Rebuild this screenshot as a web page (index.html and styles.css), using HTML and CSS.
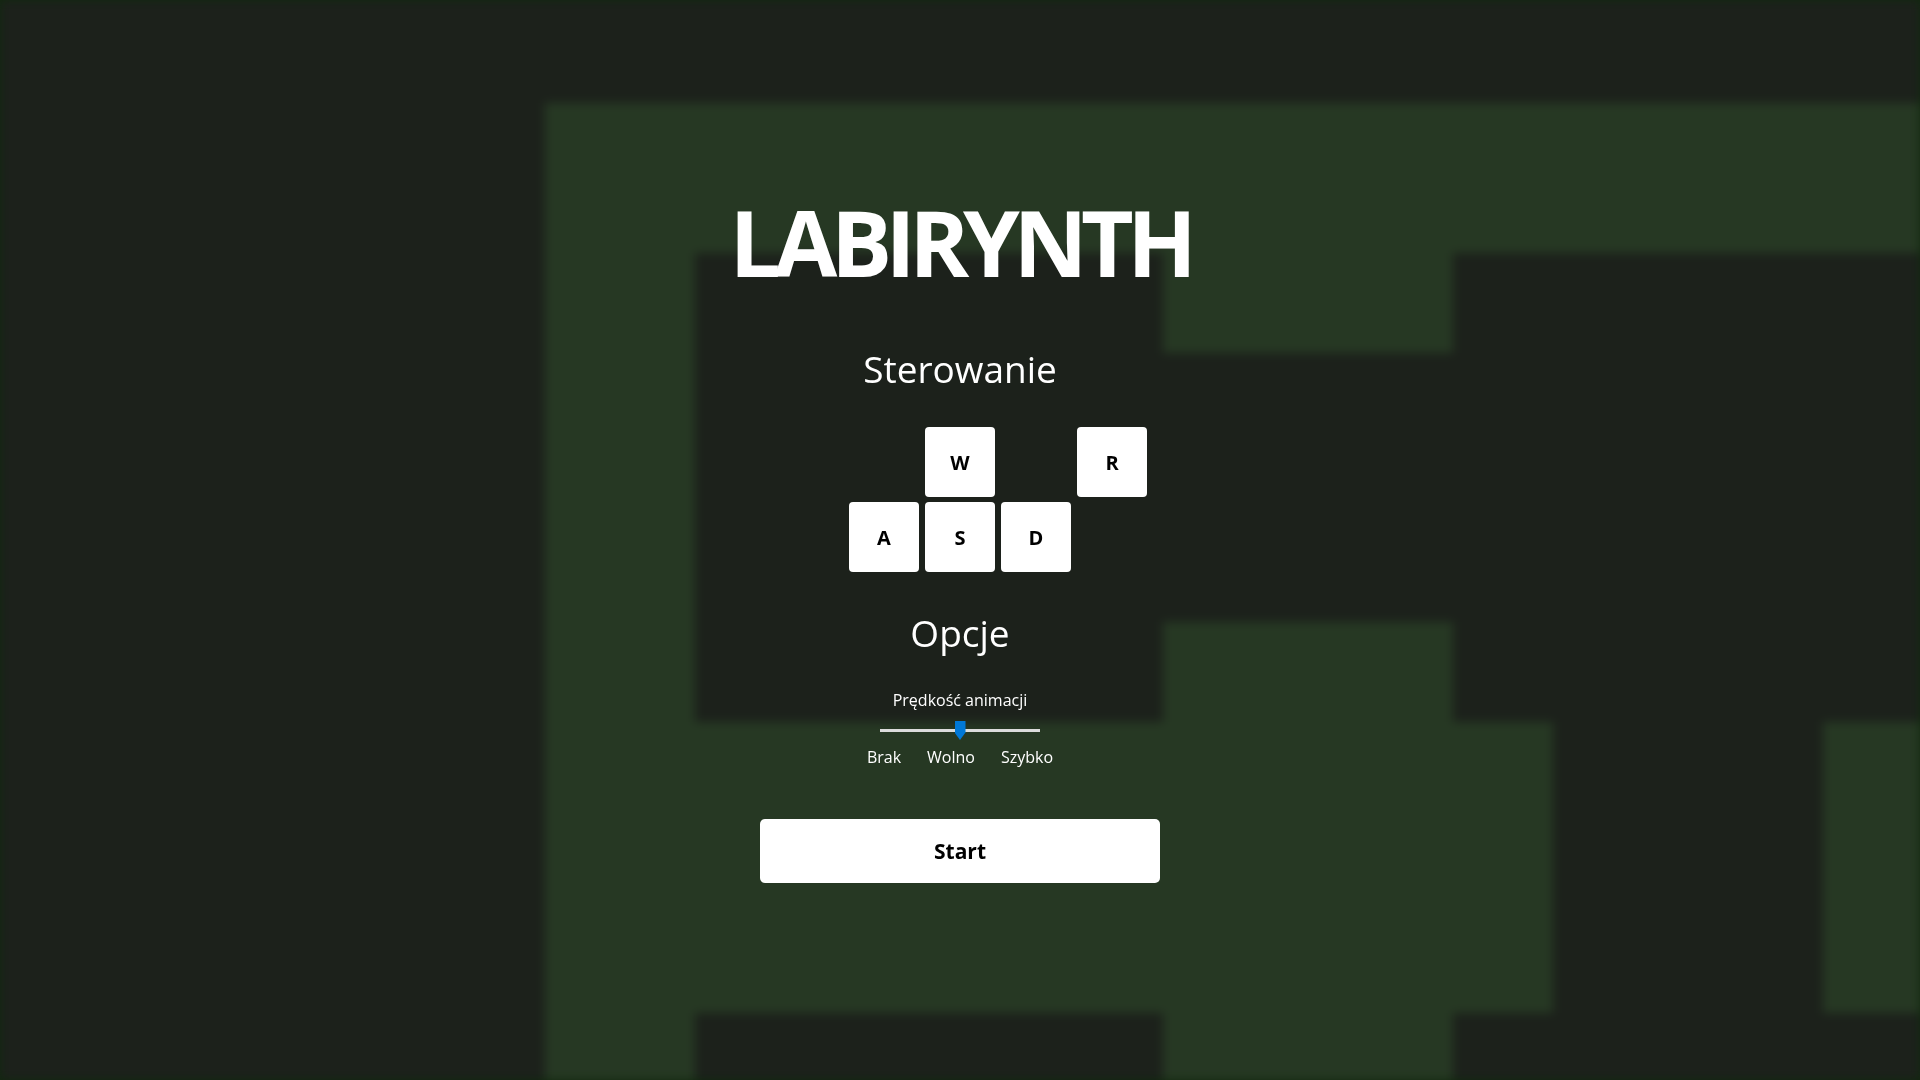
FILE: index.html
```html
<!DOCTYPE html>
<html lang="pl">
<head>
    <meta charset="utf-8">
    <title>Labirynth</title>
    <link rel="stylesheet" href="styles.css">
</head>
<body>
    <!-- Maze drawn behind the menu -->
    <svg class="maze" viewBox="0 0 1920 1080" preserveAspectRatio="none">
        <rect class="wall" x="0" y="0" width="1920" height="1080"/>
        <rect class="path" x="545" y="103" width="1375" height="150"/>
        <rect class="path" x="545" y="103" width="150" height="977"/>
        <rect class="path" x="1163" y="253" width="290" height="100"/>
        <rect class="path" x="1163" y="622" width="290" height="100"/>
        <rect class="path" x="545" y="722" width="1008" height="291"/>
        <rect class="path" x="1823" y="722" width="97" height="291"/>
        <rect class="path" x="1163" y="1013" width="290" height="67"/>
    </svg>

    <main class="menu">
        <h1 class="title">LABIRYNTH</h1>

        <h2 class="section-title">Sterowanie</h2>
        <div class="keys">
            <div class="key key-w">W</div>
            <div class="key key-r">R</div>
            <div class="key key-a">A</div>
            <div class="key key-s">S</div>
            <div class="key key-d">D</div>
        </div>

        <h2 class="section-title options-title">Opcje</h2>
        <label class="option-label" for="speed">Prędkość animacji</label>
        <input type="range" class="speed" id="speed" min="0" max="2" step="1" value="1">
        <div class="speed-labels">
            <span>Brak</span>
            <span>Wolno</span>
            <span>Szybko</span>
        </div>

        <button class="start-btn" id="startBtn">Start</button>
    </main>
</body>
</html>
```

FILE: styles.css
```css
html, body {
    margin: 0;
    height: 100%;
}

body {
    background: #11280e;
    font-family: 'Open Sans', 'Noto Sans', sans-serif;
    color: #fff;
    overflow: hidden;
}

.maze {
    position: fixed;
    top: 0;
    left: 0;
    width: 100%;
    height: 100%;
    z-index: -1;
    filter: blur(5px);
}

.maze .wall { fill: #1c211b; }
.maze .path { fill: #263823; }

.menu {
    height: 100vh;
    display: flex;
    flex-direction: column;
    align-items: center;
    justify-content: center;
}

.title {
    margin: 0 0 62px;
    font-size: 91px;
    line-height: 1;
    font-weight: 700;
    letter-spacing: -6.4px;
}

.section-title {
    margin: 0 0 40px;
    font-size: 37px;
    line-height: 1;
    font-weight: 400;
}

.options-title {
    margin-bottom: 41px;
}

.keys {
    display: grid;
    grid-template-columns: repeat(4, 70px);
    grid-template-rows: 70px 70px;
    gap: 5px 6px;
    margin-left: 76px;
    margin-bottom: 42px;
}

.key {
    background: #fff;
    color: #000;
    border-radius: 4px;
    display: flex;
    align-items: center;
    justify-content: center;
    font-size: 20px;
    font-weight: 700;
}

.key-w { grid-column: 2; grid-row: 1; }
.key-r { grid-column: 4; grid-row: 1; }
.key-a { grid-column: 1; grid-row: 2; }
.key-s { grid-column: 2; grid-row: 2; }
.key-d { grid-column: 3; grid-row: 2; }

.option-label {
    font-size: 16px;
    line-height: 1;
    margin-bottom: 13px;
}

.speed {
    -webkit-appearance: none;
    appearance: none;
    width: 160px;
    height: 19px;
    margin: 0 0 9px;
    background: transparent;
}

.speed::-webkit-slider-runnable-track {
    height: 3px;
    background: #dcdcdc;
}

.speed::-webkit-slider-thumb {
    -webkit-appearance: none;
    width: 11px;
    height: 19px;
    margin-top: -8px;
    background: #0078d7;
    border: none;
    clip-path: polygon(0 0, 100% 0, 100% 60%, 50% 100%, 0 60%);
}

.speed:focus {
    outline: none;
}

.speed-labels {
    display: flex;
    gap: 26px;
    font-size: 16px;
    line-height: 1;
    margin-bottom: 54px;
}

.start-btn {
    width: 400px;
    height: 64px;
    background: #fff;
    color: #000;
    border: none;
    border-radius: 5px;
    font-family: inherit;
    font-size: 21px;
    font-weight: 700;
    cursor: pointer;
}
```
